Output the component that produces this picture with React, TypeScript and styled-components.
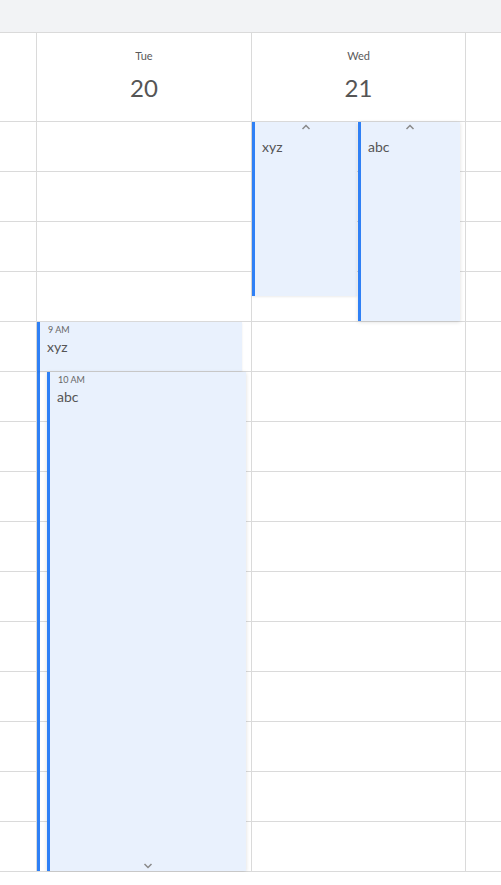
import React from "react";
import styled, { createGlobalStyle } from "styled-components";

const GlobalStyle = createGlobalStyle`
  html, body { margin: 0; padding: 0; background: #fff; }
  body { font-family: Lato, "Open Sans", sans-serif; color: #555; }
`;

const LINE = "#dadada";
const ROW_H = 50;
const ROWS = 15;

const Page = styled.div`
  width: 501px;
  display: flex;
  flex-direction: column;
`;

const TopBar = styled.div`
  height: 32px;
  background: #f2f3f5;
  border-bottom: 1px solid ${LINE};
`;

const Columns = styled.div`
  display: grid;
  grid-template-columns: 36px 215px 214px 36px;
`;

const Column = styled.div<{ $first?: boolean }>`
  display: flex;
  flex-direction: column;
  border-left: ${(p) => (p.$first ? "none" : `1px solid ${LINE}`)};
  min-width: 0;
`;

const Header = styled.div`
  height: 89px;
  border-bottom: 1px solid ${LINE};
  display: flex;
  flex-direction: column;
  align-items: center;
  box-sizing: border-box;
  padding-top: 15px;
`;

const DayName = styled.div`
  font-size: 11px;
  line-height: 16px;
  color: #5a5a5a;
`;

const DayNum = styled.div`
  font-size: 24px;
  line-height: 30px;
  margin-top: 9px;
  color: #555;
`;

const Body = styled.div`
  position: relative;
  display: flex;
  flex-direction: column;
`;

const Slot = styled.div`
  height: ${ROW_H}px;
  box-sizing: border-box;
  border-bottom: 1px solid ${LINE};
`;

const Event = styled.div<{ $shadow?: boolean }>`
  position: absolute;
  box-sizing: border-box;
  background: #e9f1fd;
  border-left: 3px solid #2f80f5;
  padding: 2px 8px 0 7px;
  box-shadow: ${(p) => (p.$shadow ? "0 1px 4px rgba(0,0,0,0.14)" : "0 1px 2px rgba(0,0,0,0.08)")};
  overflow: hidden;
`;

const Rail = styled.div`
  position: absolute;
  width: 3px;
  background: #2f80f5;
`;

const Time = styled.div`
  font-size: 9px;
  line-height: 11px;
  color: #666;
  padding-left: 1px;
`;

const Title = styled.div<{ $gap?: number }>`
  font-size: 14px;
  line-height: 18px;
  margin-top: ${(p) => p.$gap ?? 0}px;
  color: #555;
`;

const CaretUp = styled.div`
  height: 10px;
  display: flex;
  justify-content: center;
  align-items: center;
  margin-top: -2px;
  margin-bottom: 6px;
`;

const CaretDown = styled.div`
  position: absolute;
  left: 0;
  right: 0;
  bottom: 2px;
  display: flex;
  justify-content: center;
`;

const Chevron = ({ up }: { up?: boolean }) => (
  <svg width="10" height="6" viewBox="0 0 10 6">
    <path
      d={up ? "M1.5 5 L5 1.5 L8.5 5" : "M1.5 1 L5 4.5 L8.5 1"}
      fill="none"
      stroke="#8a8a8a"
      strokeWidth="1.5"
    />
  </svg>
);

const Slots = () => (
  <>
    {Array.from({ length: ROWS }).map((_, i) => (
      <Slot key={i} />
    ))}
  </>
);

export default function App() {
  return (
    <Page>
      <GlobalStyle />
      <TopBar />
      <Columns>
        <Column $first>
          <Header />
          <Body>
            <Slots />
          </Body>
        </Column>

        <Column>
          <Header>
            <DayName>Tue</DayName>
            <DayNum>20</DayNum>
          </Header>
          <Body>
            <Slots />
            <Rail style={{ left: 0, top: 200, height: 549 }} />
            <Event style={{ left: 0, top: 200, width: 205, height: 49 }}>
              <Time>9 AM</Time>
              <Title $gap={3}>xyz</Title>
            </Event>
            <Event $shadow style={{ left: 10, top: 250, width: 199, height: 499 }}>
              <Time>10 AM</Time>
              <Title $gap={3}>abc</Title>
              <CaretDown>
                <Chevron />
              </CaretDown>
            </Event>
          </Body>
        </Column>

        <Column>
          <Header>
            <DayName>Wed</DayName>
            <DayNum>21</DayNum>
          </Header>
          <Body>
            <Slots />
            <Event style={{ left: 0, top: 0, width: 105, height: 174 }}>
              <CaretUp>
                <Chevron up />
              </CaretUp>
              <Title>xyz</Title>
            </Event>
            <Event $shadow style={{ left: 106, top: 0, width: 102, height: 199 }}>
              <CaretUp>
                <Chevron up />
              </CaretUp>
              <Title>abc</Title>
            </Event>
          </Body>
        </Column>

        <Column>
          <Header />
          <Body>
            <Slots />
          </Body>
        </Column>
      </Columns>
    </Page>
  );
}
